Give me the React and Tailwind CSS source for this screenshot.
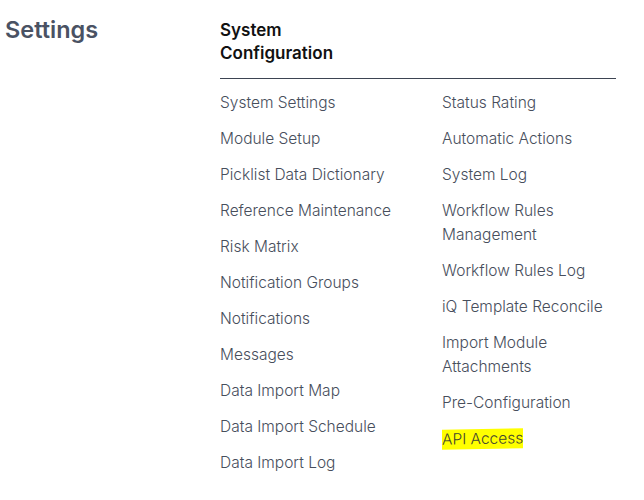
const leftItems = [
  "System Settings",
  "Module Setup",
  "Picklist Data Dictionary",
  "Reference Maintenance",
  "Risk Matrix",
  "Notification Groups",
  "Notifications",
  "Messages",
  "Data Import Map",
  "Data Import Schedule",
  "Data Import Log",
];

const rightItems = [
  "Status Rating",
  "Automatic Actions",
  "System Log",
  "Workflow Rules Management",
  "Workflow Rules Log",
  "iQ Template Reconcile",
  "Import Module Attachments",
  "Pre-Configuration",
];

export default function App() {
  return (
    <div
      className="flex h-[500px] w-[644px] bg-white"
      style={{ fontFamily: "Inter, 'Noto Sans', sans-serif" }}
    >
      {/* Page title */}
      <div className="w-[220px] pl-[5px] pt-[15px]">
        <h1 className="text-[23.5px] font-semibold leading-[30px] text-[#4a5263]">
          Settings
        </h1>
      </div>

      {/* System configuration */}
      <div className="w-[396px] pt-[19px]">
        <h2 className="w-[150px] text-[17px] font-semibold leading-[23px] text-[#111111]">
          System Configuration
        </h2>
        <div className="mt-[13px] border-t border-[#3d4452]" />

        <div className="mt-[12px] flex text-[15.5px] font-light leading-[24px] text-[#474e5c]">
          <ul className="flex w-[222px] flex-col gap-3">
            {leftItems.map((item) => (
              <li key={item}>{item}</li>
            ))}
          </ul>
          <ul className="flex w-[174px] flex-col gap-3">
            {rightItems.map((item) => (
              <li key={item}>{item}</li>
            ))}
            <li>
              <span className="-skew-y-1 inline-block bg-[#ffff00] leading-[20px] text-[#3f4430]">
                API Access
              </span>
            </li>
          </ul>
        </div>
      </div>
    </div>
  );
}
